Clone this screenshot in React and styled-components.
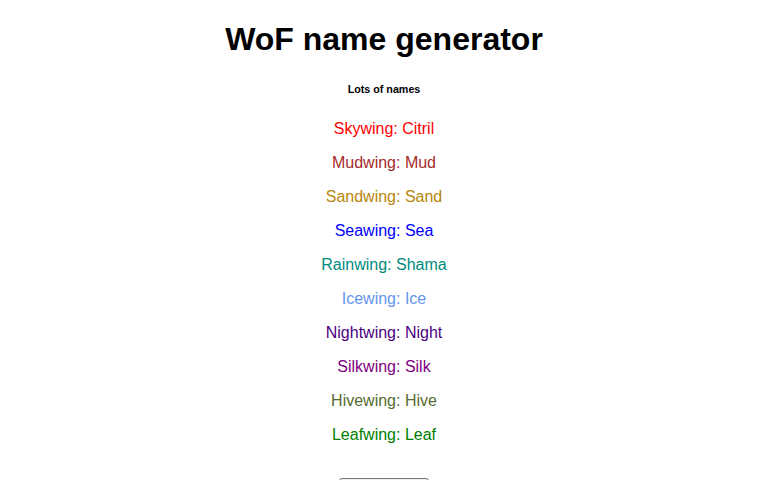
import React from "react";
import styled, { createGlobalStyle } from "styled-components";

const GlobalStyle = createGlobalStyle`
  body {
    margin: 0 8px;
    font-family: "Liberation Sans", Arial, sans-serif;
    background: #ffffff;
  }
`;

const Page = styled.main`
  text-align: center;
`;

const Title = styled.h1`
  font-size: 2em;
  margin: 0.67em 0;
`;

const Subtitle = styled.h6`
  font-size: 0.67em;
  margin: 2.33em 0;
`;

const Name = styled.p`
  margin: 1em 0;
  color: ${(p) => p.$color};
`;

const GenerateButton = styled.button`
  width: 90px;
  height: 30px;
  margin-top: 18px;
  font-family: inherit;
  font-size: 13px;
  background: #efefef;
  border: 1px solid #767676;
  border-radius: 3px;
`;

const TRIBES = [
  { tribe: "Skywing", name: "Citril", color: "#ff0000" },
  { tribe: "Mudwing", name: "Mud", color: "#a52a2a" },
  { tribe: "Sandwing", name: "Sand", color: "#b8860b" },
  { tribe: "Seawing", name: "Sea", color: "#0000ff" },
  { tribe: "Rainwing", name: "Shama", color: "#008b80" },
  { tribe: "Icewing", name: "Ice", color: "#6495ed" },
  { tribe: "Nightwing", name: "Night", color: "#4b0082" },
  { tribe: "Silkwing", name: "Silk", color: "#800080" },
  { tribe: "Hivewing", name: "Hive", color: "#556b2f" },
  { tribe: "Leafwing", name: "Leaf", color: "#008000" },
];

export default function App() {
  return (
    <>
      <GlobalStyle />
      <Page>
        <Title>WoF name generator</Title>
        <Subtitle>Lots of names</Subtitle>
        {TRIBES.map((t) => (
          <Name key={t.tribe} $color={t.color}>
            {t.tribe}: {t.name}
          </Name>
        ))}
        <GenerateButton>Generate</GenerateButton>
      </Page>
    </>
  );
}
